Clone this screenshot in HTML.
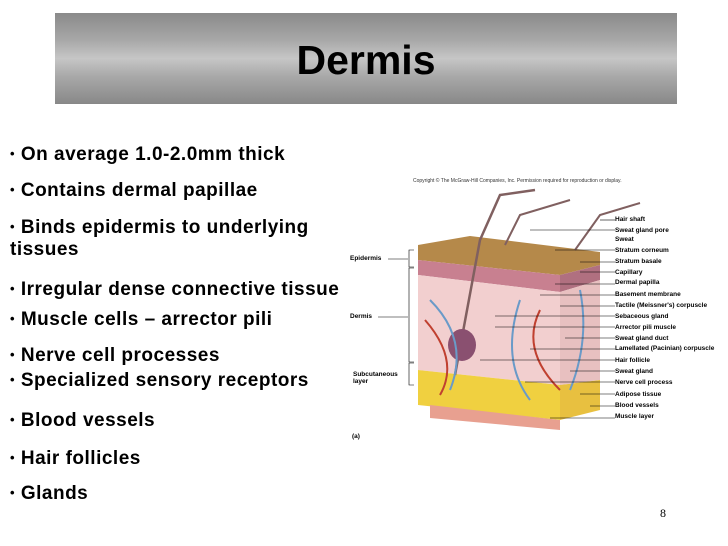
<html><head><style>
body{margin:0;width:728px;height:546px;background:#fff;position:relative;overflow:hidden;font-family:"Liberation Sans",Arial,sans-serif}
.banner{position:absolute;left:55px;top:13px;width:622px;height:91px;background:linear-gradient(#8a8a8a,#a8a8a8 30%,#c6c6c6 50%,#a8a8a8 70%,#888)}
.banner div{text-align:center;font-weight:bold;font-size:41px;line-height:95px;color:#000}
.b{position:absolute;left:10px;font-weight:bold;font-size:19px;letter-spacing:0.5px;color:#000;white-space:nowrap}
.b span{font-size:13px;vertical-align:2px}
.lab{position:absolute;left:615px;font-size:6.5px;font-weight:bold;white-space:nowrap}
.ll{position:absolute;font-size:6.5px;font-weight:bold}
</style></head><body>
<div class="banner"><div>Dermis</div></div>
<div class="b" style="top:144px"><span>•</span> On average 1.0-2.0mm thick</div>
<div class="b" style="top:180px"><span>•</span> Contains dermal papillae</div>
<div class="b" style="top:217px"><span>•</span> Binds epidermis to underlying</div>
<div class="b" style="top:239px">tissues</div>
<div class="b" style="top:279px"><span>•</span> Irregular dense connective tissue</div>
<div class="b" style="top:309px"><span>•</span> Muscle cells – arrector pili</div>
<div class="b" style="top:345px"><span>•</span> Nerve cell processes</div>
<div class="b" style="top:370px"><span>•</span> Specialized sensory receptors</div>
<div class="b" style="top:410px"><span>•</span> Blood vessels</div>
<div class="b" style="top:448px"><span>•</span> Hair follicles</div>
<div class="b" style="top:483px"><span>•</span> Glands</div>
<div style="position:absolute;left:413px;top:178px;font-size:5px;color:#333">Copyright © The McGraw-Hill Companies, Inc. Permission required for reproduction or display.</div>
<svg style="position:absolute;left:0;top:0" width="728" height="546">
<polygon points="418,260 418,245 470,236 600,252 600,265 560,275" fill="#b5894a"/>
<polygon points="418,260 560,275 560,292 418,275" fill="#c88090"/>
<polygon points="560,275 600,265 600,280 560,292" fill="#b07080"/>
<polygon points="418,275 560,292 560,385 418,370" fill="#f2cfcf"/>
<polygon points="560,292 600,280 600,380 560,385" fill="#e8c0c0"/>
<polygon points="418,370 560,385 560,420 418,405" fill="#f0d040"/>
<polygon points="560,385 600,380 600,410 560,420" fill="#e8c040"/>
<polygon points="430,405 560,420 560,430 430,418" fill="#e8a090"/>
<path d="M455,375 L480,240 L500,195 L535,190" stroke="#806060" stroke-width="2.5" fill="none"/>
<path d="M505,245 L520,215 L570,200" stroke="#806060" stroke-width="2" fill="none"/>
<path d="M575,250 L600,215 L640,203" stroke="#806060" stroke-width="2" fill="none"/>
<ellipse cx="462" cy="345" rx="14" ry="16" fill="#8a5070"/>
<path d="M430,300 Q470,340 450,390 M520,300 Q500,360 530,400 M580,290 Q590,340 570,390" stroke="#6a9ac8" stroke-width="2" fill="none"/>
<path d="M425,320 Q460,360 440,395 M540,310 Q520,350 560,390" stroke="#c04030" stroke-width="2" fill="none"/>
<g stroke="#000" stroke-width=".6">
<line x1="530" y1="230" x2="615" y2="230"/><line x1="600" y1="220" x2="615" y2="220"/><line x1="555" y1="250" x2="615" y2="250"/><line x1="580" y1="262" x2="615" y2="262"/><line x1="580" y1="272" x2="615" y2="272"/><line x1="555" y1="284" x2="615" y2="284"/><line x1="540" y1="295" x2="615" y2="295"/><line x1="560" y1="306" x2="615" y2="306"/><line x1="495" y1="316" x2="615" y2="316"/><line x1="495" y1="327" x2="615" y2="327"/><line x1="565" y1="338" x2="615" y2="338"/><line x1="530" y1="349" x2="615" y2="349"/><line x1="480" y1="360" x2="615" y2="360"/><line x1="570" y1="371" x2="615" y2="371"/><line x1="525" y1="382" x2="615" y2="382"/><line x1="580" y1="394" x2="615" y2="394"/><line x1="590" y1="406" x2="615" y2="406"/><line x1="550" y1="418" x2="615" y2="418"/>
<line x1="388" y1="259" x2="408" y2="259"/><polyline points="414,250 409,250 409,267 414,267" fill="none"/>
<line x1="378" y1="317" x2="408" y2="317"/><polyline points="414,268 409,268 409,362 414,362" fill="none"/>
<polyline points="414,363 409,363 409,385 414,385" fill="none"/>
</g></svg>
<div class="ll" style="left:350px;top:255px">Epidermis</div>
<div class="ll" style="left:350px;top:313px">Dermis</div>
<div class="ll" style="left:353px;top:371px">Subcutaneous<br>layer</div>
<div class="ll" style="left:352px;top:433px">(a)</div>
<div class="lab" style="top:216px">Hair shaft</div>
<div class="lab" style="top:227px">Sweat gland pore</div>
<div class="lab" style="top:236px">Sweat</div>
<div class="lab" style="top:247px">Stratum corneum</div>
<div class="lab" style="top:258px">Stratum basale</div>
<div class="lab" style="top:269px">Capillary</div>
<div class="lab" style="top:279px">Dermal papilla</div>
<div class="lab" style="top:291px">Basement membrane</div>
<div class="lab" style="top:302px">Tactile (Meissner's) corpuscle</div>
<div class="lab" style="top:313px">Sebaceous gland</div>
<div class="lab" style="top:324px">Arrector pili muscle</div>
<div class="lab" style="top:335px">Sweat gland duct</div>
<div class="lab" style="top:345px">Lamellated (Pacinian) corpuscle</div>
<div class="lab" style="top:357px">Hair follicle</div>
<div class="lab" style="top:368px">Sweat gland</div>
<div class="lab" style="top:379px">Nerve cell process</div>
<div class="lab" style="top:391px">Adipose tissue</div>
<div class="lab" style="top:402px">Blood vessels</div>
<div class="lab" style="top:413px">Muscle layer</div>
<div style="position:absolute;left:660px;top:506px;font-family:'Liberation Serif',serif;font-size:12px">8</div>
</body></html>
